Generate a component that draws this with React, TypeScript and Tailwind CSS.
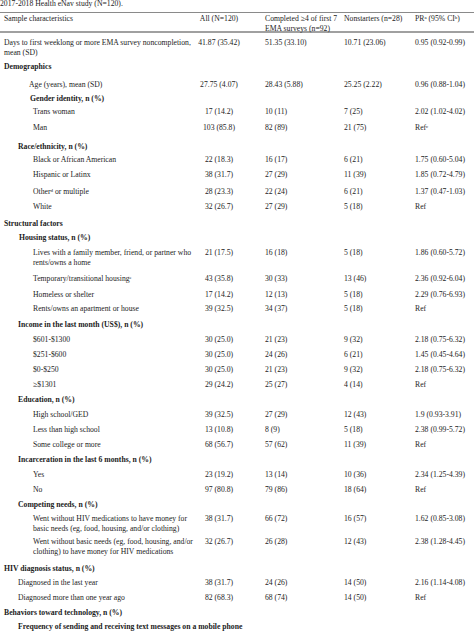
import type { ReactNode } from "react";

type Row = {
    label: ReactNode;
    pad: string;
    h: string;
    bold?: boolean;
    v?: [ReactNode, ReactNode, ReactNode, ReactNode];
};

const Sup = ({ children }: { children: ReactNode }) => (
    <sup className="text-[5px]">{children}</sup>
);

const rows: Row[] = [
    {
        label: <>Days to first weeklong or more EMA survey noncompletion,<br />mean (SD)</>,
        pad: "pl-[4px]", h: "h-[24px]",
        v: ["41.87 (35.42)", "51.35 (33.10)", "10.71 (23.06)", "0.95 (0.92-0.99)"],
    },
    { label: "Demographics", pad: "pl-[4px]", h: "h-[18px]", bold: true },
    { label: "Age (years), mean (SD)", pad: "pl-[29px]", h: "h-[14px]", v: ["27.75 (4.07)", "28.43 (5.88)", "25.25 (2.22)", "0.96 (0.88-1.04)"] },
    { label: "Gender identity, n (%)", pad: "pl-[30px]", h: "h-[13px]", bold: true },
    { label: "Trans woman", pad: "pl-[33px]", h: "h-[16px]", v: ["17 (14.2)", "10 (11)", "7 (25)", "2.02 (1.02-4.02)"] },
    { label: "Man", pad: "pl-[33px]", h: "h-[19px]", v: ["103 (85.8)", "82 (89)", "21 (75)", <>Ref<Sup>c</Sup></>] },
    { label: "Race/ethnicity, n (%)", pad: "pl-[18px]", h: "h-[13px]", bold: true },
    { label: "Black or African American", pad: "pl-[33px]", h: "h-[15px]", v: ["22 (18.3)", "16 (17)", "6 (21)", "1.75 (0.60-5.04)"] },
    { label: "Hispanic or Latinx", pad: "pl-[33px]", h: "h-[17px]", v: ["38 (31.7)", "27 (29)", "11 (39)", "1.85 (0.72-4.79)"] },
    { label: <>Other<Sup>d</Sup> or multiple</>, pad: "pl-[33px]", h: "h-[15px]", v: ["28 (23.3)", "22 (24)", "6 (21)", "1.37 (0.47-1.03)"] },
    { label: "White", pad: "pl-[33px]", h: "h-[17px]", v: ["32 (26.7)", "27 (29)", "5 (18)", "Ref"] },
    { label: "Structural factors", pad: "pl-[4px]", h: "h-[14px]", bold: true },
    { label: "Housing status, n (%)", pad: "pl-[19px]", h: "h-[15px]", bold: true },
    {
        label: <>Lives with a family member, friend, or partner who<br />rents/owns a home</>,
        pad: "pl-[33px]", h: "h-[26px]",
        v: ["21 (17.5)", "16 (18)", "5 (18)", "1.86 (0.60-5.72)"],
    },
    { label: <>Temporary/transitional housing<Sup>e</Sup></>, pad: "pl-[33px]", h: "h-[16px]", v: ["43 (35.8)", "30 (33)", "13 (46)", "2.36 (0.92-6.04)"] },
    { label: "Homeless or shelter", pad: "pl-[33px]", h: "h-[14px]", v: ["17 (14.2)", "12 (13)", "5 (18)", "2.29 (0.76-6.93)"] },
    { label: "Rents/owns an apartment or house", pad: "pl-[33px]", h: "h-[16px]", v: ["39 (32.5)", "34 (37)", "5 (18)", "Ref"] },
    { label: "Income in the last month (US$), n (%)", pad: "pl-[18px]", h: "h-[15px]", bold: true },
    { label: "$601-$1300", pad: "pl-[33px]", h: "h-[15px]", v: ["30 (25.0)", "21 (23)", "9 (32)", "2.18 (0.75-6.32)"] },
    { label: "$251-$600", pad: "pl-[33px]", h: "h-[15px]", v: ["30 (25.0)", "24 (26)", "6 (21)", "1.45 (0.45-4.64)"] },
    { label: "$0-$250", pad: "pl-[33px]", h: "h-[15px]", v: ["30 (25.0)", "21 (23)", "9 (32)", "2.18 (0.75-6.32)"] },
    { label: "≥$1301", pad: "pl-[33px]", h: "h-[15px]", v: ["29 (24.2)", "25 (27)", "4 (14)", "Ref"] },
    { label: "Education, n (%)", pad: "pl-[18px]", h: "h-[15px]", bold: true },
    { label: "High school/GED", pad: "pl-[33px]", h: "h-[15px]", v: ["39 (32.5)", "27 (29)", "12 (43)", "1.9 (0.93-3.91)"] },
    { label: "Less than high school", pad: "pl-[33px]", h: "h-[15px]", v: ["13 (10.8)", "8 (9)", "5 (18)", "2.38 (0.99-5.72)"] },
    { label: "Some college or more", pad: "pl-[33px]", h: "h-[15px]", v: ["68 (56.7)", "57 (62)", "11 (39)", "Ref"] },
    { label: "Incarceration in the last 6 months, n (%)", pad: "pl-[18px]", h: "h-[15px]", bold: true },
    { label: "Yes", pad: "pl-[33px]", h: "h-[15px]", v: ["23 (19.2)", "13 (14)", "10 (36)", "2.34 (1.25-4.39)"] },
    { label: "No", pad: "pl-[33px]", h: "h-[15px]", v: ["97 (80.8)", "79 (86)", "18 (64)", "Ref"] },
    { label: "Competing needs, n (%)", pad: "pl-[18px]", h: "h-[14px]", bold: true },
    {
        label: <>Went without HIV medications to have money for<br />basic needs (eg, food, housing, and/or clothing)</>,
        pad: "pl-[33px]", h: "h-[23px]",
        v: ["38 (31.7)", "66 (72)", "16 (57)", "1.62 (0.85-3.08)"],
    },
    {
        label: <>Went without basic needs (eg, food, housing, and/or<br />clothing) to have money for HIV medications</>,
        pad: "pl-[33px]", h: "h-[27px]",
        v: ["32 (26.7)", "26 (28)", "12 (43)", "2.38 (1.28-4.45)"],
    },
    { label: "HIV diagnosis status, n (%)", pad: "pl-[4px]", h: "h-[14px]", bold: true },
    { label: "Diagnosed in the last year", pad: "pl-[18px]", h: "h-[15px]", v: ["38 (31.7)", "24 (26)", "14 (50)", "2.16 (1.14-4.08)"] },
    { label: "Diagnosed more than one year ago", pad: "pl-[18px]", h: "h-[15px]", v: ["82 (68.3)", "68 (74)", "14 (50)", "Ref"] },
    { label: "Behaviors toward technology, n (%)", pad: "pl-[4px]", h: "h-[14px]", bold: true },
    { label: "Frequency of sending and receiving text messages on a mobile phone", pad: "pl-[18px]", h: "h-[14px]", bold: true },
];

export default function App() {
    return (
        <div className="w-[474px] h-[637px] overflow-hidden bg-white text-[#1c1c1c] text-[7.7px] leading-[10px] font-['Liberation_Serif',serif]">
            <div className="h-[12px] leading-[8px] whitespace-nowrap">2017-2018 Health eNav study (N=120).</div>

            <div className="grid grid-cols-[193px_52px_99px_71px_1fr] h-[21px] border-t border-b-2 border-t-[#8a8a8a] border-b-[#a0a0a0] pt-[1px]">
                <div className="pl-[4px]">Sample characteristics</div>
                <div className="text-center whitespace-nowrap">All (N=120)</div>
                <div className="pl-[20px] whitespace-nowrap">Completed ≥4 of first 7<br />EMA surveys (n=92)</div>
                <div className="whitespace-nowrap">Nonstarters (n=28)</div>
                <div className="whitespace-nowrap">PR<Sup>a</Sup> (95% CI<Sup>b</Sup>)</div>
            </div>

            <div className="mt-[5px]">
                {rows.map((r, i) => (
                    <div key={i} className={`grid grid-cols-[193px_52px_99px_71px_1fr] whitespace-nowrap ${r.h}`}>
                        <div className={`${r.pad} ${r.bold ? "font-bold" : ""}`}>{r.label}</div>
                        {r.v && (
                            <>
                                <div className="text-center">{r.v[0]}</div>
                                <div className="pl-[20px]">{r.v[1]}</div>
                                <div>{r.v[2]}</div>
                                <div>{r.v[3]}</div>
                            </>
                        )}
                    </div>
                ))}
            </div>
        </div>
    );
}
